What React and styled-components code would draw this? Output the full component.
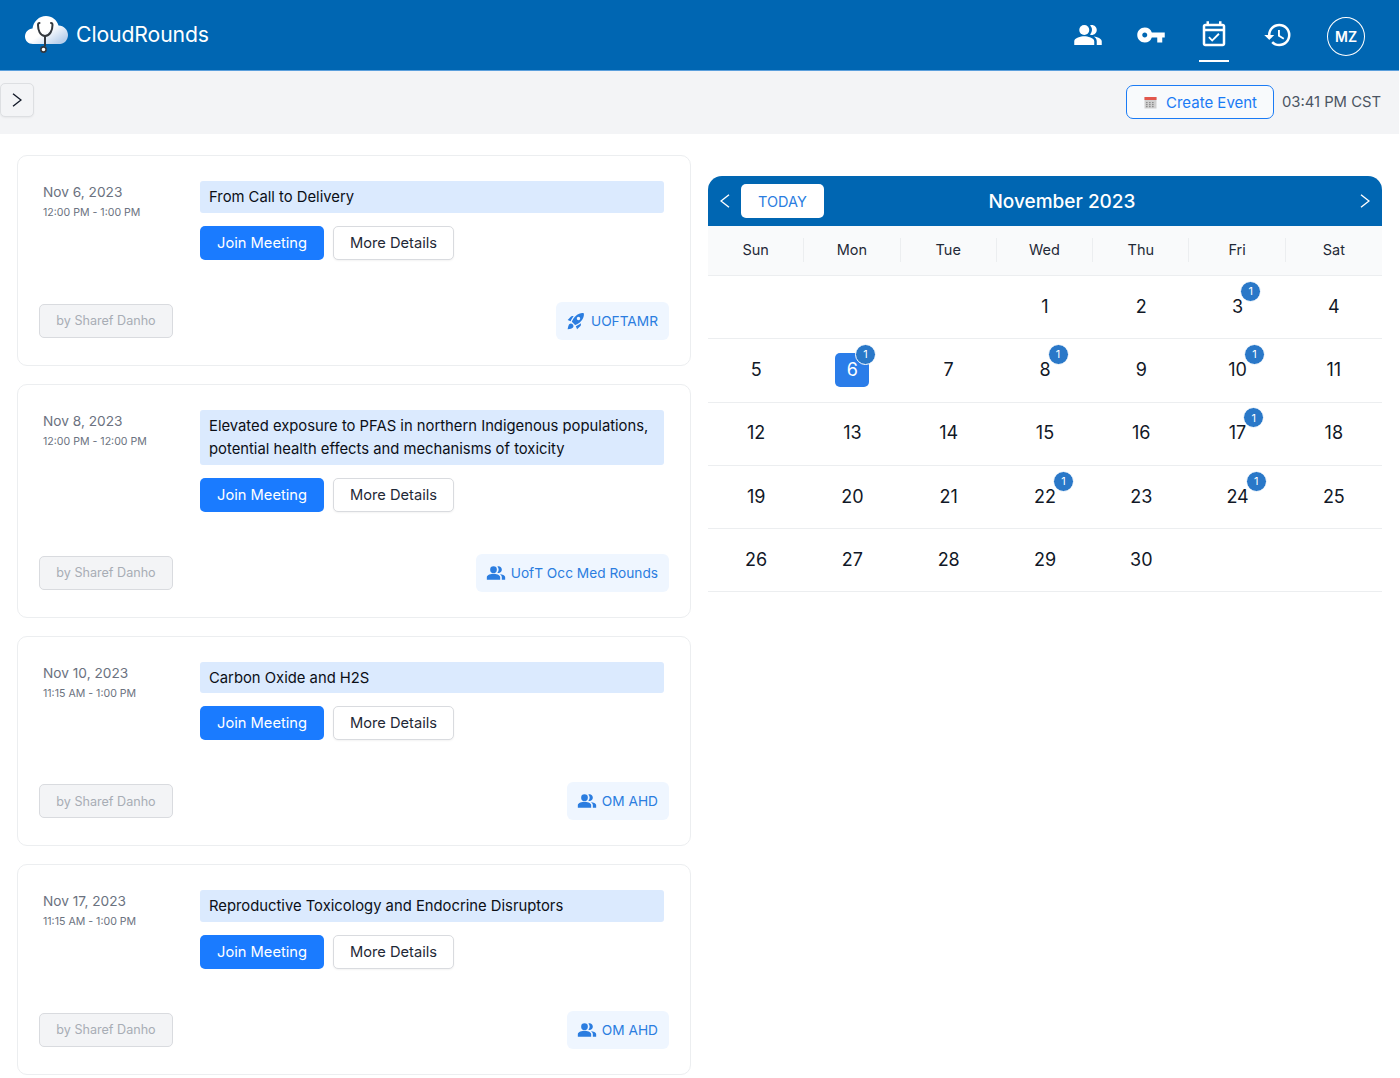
import styled, { createGlobalStyle } from "styled-components";
import { MdPeopleAlt, MdVpnKey, MdOutlineEventAvailable, MdHistory, MdRocketLaunch } from "react-icons/md";

const events = [
  { date: "Nov 6, 2023", time: "12:00 PM - 1:00 PM", title: "From Call to Delivery", tag: "UOFTAMR", rocket: true },
  {
    date: "Nov 8, 2023",
    time: "12:00 PM - 12:00 PM",
    title: "Elevated exposure to PFAS in northern Indigenous populations, potential health effects and mechanisms of toxicity",
    tag: "UofT Occ Med Rounds",
  },
  { date: "Nov 10, 2023", time: "11:15 AM - 1:00 PM", title: "Carbon Oxide and H2S", tag: "OM AHD" },
  { date: "Nov 17, 2023", time: "11:15 AM - 1:00 PM", title: "Reproductive Toxicology and Endocrine Disruptors", tag: "OM AHD" },
];

const weekDays = ["Sun", "Mon", "Tue", "Wed", "Thu", "Fri", "Sat"];
const badgeDays = [3, 6, 8, 10, 17, 22, 24];
const days = [null, null, null, ...Array.from({ length: 30 }, (_, i) => i + 1), null, null];

const LogoMark = () => (
  <svg width="44" height="38" viewBox="0 0 44 38">
    <defs>
      <linearGradient id="cloudShade" x1="0.35" y1="0.2" x2="0.95" y2="0.8">
        <stop offset="0.4" stopColor="#ffffff" />
        <stop offset="1" stopColor="#b9d0ec" />
      </linearGradient>
    </defs>
    <path
      d="M8 28C3 28 0 24.500 0 20.500C0 16 3.500 13 7.500 12.500C8.500 5.500 14 0 21 0C27 0 32 4 33.500 9.500C39 9.500 43 14 43 19C43 24 39 28 35 28Z"
      fill="url(#cloudShade)"
    />
    <path
      d="M14.500 7C13.500 7 13 7.800 13 9C13 14 15 20 20 20C25 20 27.500 14 27.500 9C27.500 7.800 27 7 26 7"
      fill="none"
      stroke="#33383e"
      strokeWidth="2"
      strokeLinecap="round"
    />
    <path d="M20 20V30" fill="none" stroke="#33383e" strokeWidth="2" />
    <circle cx="18.500" cy="33.500" r="2.600" fill="#ffffff" stroke="#33383e" strokeWidth="1.600" />
  </svg>
);

const CalendarGlyph = () => (
  <svg width="13" height="13" viewBox="0 0 13 13">
    <rect x="0.500" y="1" width="12" height="11.500" fill="#cfcfcf" />
    <rect x="0.500" y="1" width="12" height="3" fill="#e2574c" />
    <g fill="#8e8e8e">
      {[2, 5, 8].map((x) =>
        [6, 8, 10].map((y) => <rect key={`${x}-${y}`} x={x} y={y} width="1.600" height="1.200" />)
      )}
    </g>
  </svg>
);

const Chevron = ({ left }) => (
  <svg width="10" height="14" viewBox="0 0 10 14">
    <polyline
      points={left ? "9,0.700 1,7 9,13.300" : "1,0.700 9,7 1,13.300"}
      fill="none"
      stroke="currentColor"
      strokeWidth="1.400"
    />
  </svg>
);

const EventCard = ({ event }) => (
  <Card>
    <CardTop>
      <DateBlock>
        <DateText>{event.date}</DateText>
        <TimeText>{event.time}</TimeText>
      </DateBlock>
      <CardMain>
        <Title>{event.title}</Title>
        <Actions>
          <JoinButton>Join Meeting</JoinButton>
          <DetailsButton>More Details</DetailsButton>
        </Actions>
      </CardMain>
    </CardTop>
    <CardBottom>
      <Author>by Sharef Danho</Author>
      <Tag>
        {event.rocket ? <MdRocketLaunch size={20} /> : <MdPeopleAlt size={20} />}
        {event.tag}
      </Tag>
    </CardBottom>
  </Card>
);

const Calendar = () => (
  <CalendarBox>
    <CalendarHead>
      <ArrowButton>
        <Chevron left />
      </ArrowButton>
      <TodayButton>TODAY</TodayButton>
      <MonthTitle>November 2023</MonthTitle>
      <ArrowButton $right>
        <Chevron />
      </ArrowButton>
    </CalendarHead>
    <WeekRow>
      {weekDays.map((d) => (
        <WeekDay key={d}>{d}</WeekDay>
      ))}
    </WeekRow>
    <DayGrid>
      {days.map((day, i) => (
        <DayCell key={i}>
          {day && (
            <DayNumber $selected={day === 6}>
              <DayText>
                {day}
                {badgeDays.includes(day) && <DayBadge>1</DayBadge>}
              </DayText>
            </DayNumber>
          )}
        </DayCell>
      ))}
    </DayGrid>
  </CalendarBox>
);

const App = () => (
  <>
    <GlobalStyle />
    <Page>
      <Header>
        <Brand>
          <LogoMark />
          <BrandName>CloudRounds</BrandName>
        </Brand>
        <Nav>
          <NavIcon>
            <MdPeopleAlt size={34} />
          </NavIcon>
          <NavIcon>
            <MdVpnKey size={34} />
          </NavIcon>
          <NavIcon $active>
            <MdOutlineEventAvailable size={34} />
          </NavIcon>
          <NavIcon>
            <MdHistory size={34} />
          </NavIcon>
          <Avatar>MZ</Avatar>
        </Nav>
      </Header>
      <SubBar>
        <ToggleButton>
          <Chevron />
        </ToggleButton>
        <SubBarRight>
          <CreateButton>
            <CalendarGlyph />
            Create Event
          </CreateButton>
          <Clock>03:41 PM CST</Clock>
        </SubBarRight>
      </SubBar>
      <Content>
        <EventList>
          {events.map((e) => (
            <EventCard key={e.date} event={e} />
          ))}
        </EventList>
        <Calendar />
      </Content>
    </Page>
  </>
);

const GlobalStyle = createGlobalStyle`
  html, body {
    margin: 0;
    padding: 0;
    background: #ffffff;
    font-family: "Inter", "Liberation Sans", sans-serif;
  }
  * {
    box-sizing: border-box;
  }
`;

const Page = styled.div`
  width: 1399px;
  height: 1078px;
  overflow: hidden;
`;

const Header = styled.header`
  height: 71px;
  background: #0066b2;
  border-bottom: 1px solid #5b9fdc;
  display: flex;
  align-items: center;
  justify-content: space-between;
  padding: 0 34px 0 25px;
`;

const Brand = styled.div`
  display: flex;
  align-items: center;
  gap: 7px;
  color: #ffffff;
  font-size: 21.2px;
  letter-spacing: -0.1px;
  line-height: 24px;
`;

const BrandName = styled.span`
  margin-bottom: 2px;
`;

const Nav = styled.nav`
  display: flex;
  align-items: center;
  height: 70px;
  padding-top: 2px;
`;

const NavIcon = styled.div`
  width: 30px;
  height: 52px;
  margin-right: 33px;
  display: flex;
  align-items: center;
  justify-content: center;
  color: #ffffff;
  border-bottom: 2px solid ${(p) => (p.$active ? "#ffffff" : "transparent")};
  &:nth-child(3),
  &:nth-child(4) {
    margin-right: 34px;
  }
`;

const Avatar = styled.div`
  width: 38px;
  height: 39px;
  border: 1.5px solid #ffffff;
  border-radius: 50%;
  display: flex;
  align-items: center;
  justify-content: center;
  color: #ffffff;
  font-size: 14px;
  font-weight: 600;
`;

const SubBar = styled.div`
  height: 63px;
  background: #f3f4f6;
  display: flex;
  align-items: flex-start;
  justify-content: space-between;
  padding: 12px 18px 0 0;
`;

const ToggleButton = styled.button`
  width: 34px;
  height: 34px;
  padding: 0;
  background: #f3f4f6;
  border: 1px solid #dddfe2;
  border-radius: 5px;
  color: #111827;
  display: flex;
  align-items: center;
  justify-content: center;
  box-shadow: 0 1px 2px rgba(0, 0, 0, 0.05);
`;

const SubBarRight = styled.div`
  display: flex;
  align-items: center;
  gap: 8px;
  margin-top: 2px;
`;

const CreateButton = styled.button`
  width: 148px;
  height: 34px;
  padding: 0 0 0 17px;
  background: #f8fafc;
  border: 1px solid #1a7bf5;
  border-radius: 7px;
  display: flex;
  align-items: center;
  gap: 9px;
  color: #1a7bf5;
  font-family: inherit;
  font-size: 15px;
`;

const Clock = styled.span`
  color: #4b5563;
  font-size: 14.8px;
`;

const Content = styled.main`
  display: flex;
  align-items: flex-start;
  padding: 21px 18px 0 17px;
  gap: 17px;
`;

const EventList = styled.div`
  width: 674px;
  flex-shrink: 0;
  display: flex;
  flex-direction: column;
  gap: 18px;
`;

const Card = styled.article`
  border: 1px solid #eceef0;
  border-radius: 10px;
  background: #ffffff;
  padding: 25px 21px;
`;

const CardTop = styled.div`
  display: flex;
`;

const DateBlock = styled.div`
  width: 161px;
  padding: 2px 0 0 4px;
`;

const DateText = styled.div`
  color: #6b7280;
  font-size: 13.7px;
  line-height: 18px;
`;

const TimeText = styled.div`
  color: #6b7280;
  font-size: 10.6px;
  line-height: 14px;
  margin-top: 5px;
`;

const CardMain = styled.div`
  width: 464px;
`;

const Title = styled.div`
  background: #dbeafe;
  border-radius: 3px;
  padding: 5px 9px 3px;
  color: #0b0f17;
  font-size: 14.8px;
  line-height: 23.5px;
`;

const Actions = styled.div`
  display: flex;
  gap: 9px;
  margin-top: 13px;
`;

const JoinButton = styled.button`
  width: 124px;
  height: 34px;
  padding: 0;
  background: #1a7bff;
  border: none;
  border-radius: 5px;
  color: #ffffff;
  font-family: inherit;
  font-size: 14.7px;
`;

const DetailsButton = styled.button`
  width: 121px;
  height: 34px;
  padding: 0;
  background: #ffffff;
  border: 1px solid #d9dbdf;
  border-radius: 5px;
  color: #1f2937;
  font-family: inherit;
  font-size: 14.7px;
  box-shadow: 0 1px 2px rgba(0, 0, 0, 0.05);
`;

const CardBottom = styled.div`
  display: flex;
  align-items: center;
  justify-content: space-between;
  margin-top: 42px;
`;

const Author = styled.div`
  width: 134px;
  height: 34px;
  background: #f3f4f6;
  border: 1px solid #d9dbdf;
  border-radius: 5px;
  display: flex;
  align-items: center;
  justify-content: center;
  color: #a8adb5;
  font-size: 12.6px;
`;

const Tag = styled.div`
  height: 38px;
  padding: 0 11px 0 10px;
  background: #eff6ff;
  border-radius: 6px;
  display: flex;
  align-items: center;
  gap: 5px;
  color: #2b7de0;
  font-size: 13.7px;
`;

const CalendarBox = styled.section`
  width: 674px;
  flex-shrink: 0;
  margin-top: 21px;
`;

const CalendarHead = styled.div`
  height: 50px;
  background: #0066b2;
  border-radius: 14px 14px 0 0;
  display: flex;
  align-items: center;
  padding: 0 12px;
  position: relative;
`;

const ArrowButton = styled.div`
  width: 10px;
  display: flex;
  color: #ffffff;
  margin-left: ${(p) => (p.$right ? "auto" : "0")};
`;

const TodayButton = styled.div`
  width: 83px;
  height: 34px;
  margin-left: 11px;
  background: #ffffff;
  border-radius: 5px;
  display: flex;
  align-items: center;
  justify-content: center;
  color: #2b7de0;
  font-size: 14.5px;
`;

const MonthTitle = styled.div`
  position: absolute;
  left: 0;
  right: 0;
  text-align: center;
  pointer-events: none;
  color: #ffffff;
  font-size: 19px;
  font-weight: 500;
  transform: translateX(17px);
`;

const WeekRow = styled.div`
  height: 50px;
  padding-bottom: 2px;
  background: #f9fafb;
  border-bottom: 1px solid #eceef0;
  display: grid;
  grid-template-columns: repeat(7, 1fr);
  align-items: center;
`;

const WeekDay = styled.div`
  height: 24px;
  display: flex;
  align-items: center;
  justify-content: center;
  color: #1f2937;
  font-size: 14.5px;
  border-right: 1px solid #eceef0;
  &:last-child {
    border-right: none;
  }
`;

const DayGrid = styled.div`
  display: grid;
  grid-template-columns: repeat(7, 1fr);
`;

const DayCell = styled.div`
  height: 63.3px;
  padding-bottom: 1px;
  border-bottom: 1px solid #eceef0;
  display: flex;
  align-items: center;
  justify-content: center;
`;

const DayNumber = styled.div`
  min-width: 34px;
  height: 34px;
  border-radius: 5px;
  display: flex;
  align-items: center;
  justify-content: center;
  font-size: 18px;
  color: ${(p) => (p.$selected ? "#ffffff" : "#111827")};
  background: ${(p) => (p.$selected ? "#2b7de9" : "transparent")};
`;

const DayText = styled.span`
  position: relative;
  line-height: 22px;
`;

const DayBadge = styled.span`
  position: absolute;
  top: -15px;
  right: -18px;
  width: 21px;
  height: 21px;
  border-radius: 50%;
  background: #2a78c8;
  border: 1px solid #ffffff;
  display: flex;
  align-items: center;
  justify-content: center;
  color: #ffffff;
  font-size: 11px;
`;

export default App;
